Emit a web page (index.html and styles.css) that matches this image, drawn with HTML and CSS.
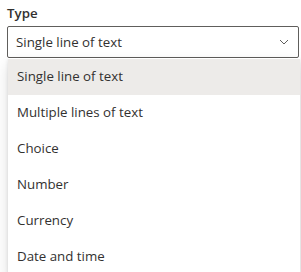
FILE: index.html
```html
<!DOCTYPE html>
<html lang="en">
  <head>
    <meta charset="UTF-8" />
    <title>Type</title>
    <link rel="stylesheet" href="styles.css">
  </head>
  <body>
    <div class="field">
      <label class="field__label">Type</label>
      <div class="dropdown">
        <span class="dropdown__title">Single line of text</span>
        <svg class="dropdown__caret" width="10" height="6" viewBox="0 0 10 6">
          <path d="M1 1l4 4 4-4" fill="none" stroke="#605e5c" stroke-width="1" />
        </svg>
      </div>
      <ul class="dropdown-list">
        <li class="dropdown-list__item selected">Single line of text</li>
        <li class="dropdown-list__item">Multiple lines of text</li>
        <li class="dropdown-list__item">Choice</li>
        <li class="dropdown-list__item">Number</li>
        <li class="dropdown-list__item">Currency</li>
        <li class="dropdown-list__item">Date and time</li>
      </ul>
    </div>
  </body>
</html>
```

FILE: styles.css
```css
body {
  margin: 0;
  background: #fff;
  font-family: "Open Sans", Arial, sans-serif;
  font-size: 13.3px;
  color: #323130;
  overflow: hidden;
}
.field {
  padding: 0 0 0 7px;
}
.field__label {
  display: block;
  font-weight: 600;
  line-height: 20px;
  padding: 3px 0 3px;
}
.dropdown {
  display: flex;
  align-items: center;
  justify-content: space-between;
  width: 292px;
  height: 32px;
  box-sizing: border-box;
  border: 1px solid #605e5c;
  border-radius: 2px;
  padding: 0 9px 0 8px;
}
.dropdown__title {
  line-height: 30px;
}
.dropdown-list {
  list-style: none;
  margin: 0 0 0 1px;
  padding: 1px 0 0;
  width: 292px;
  background: #fff;
  box-shadow: 0 6.4px 14.4px rgba(0, 0, 0, 0.13), 0 1.2px 3.6px rgba(0, 0, 0, 0.11);
}
.dropdown-list__item {
  height: 36px;
  line-height: 35px;
  padding: 0 9px;
}
.dropdown-list__item.selected {
  background: #edebe9;
}
```
